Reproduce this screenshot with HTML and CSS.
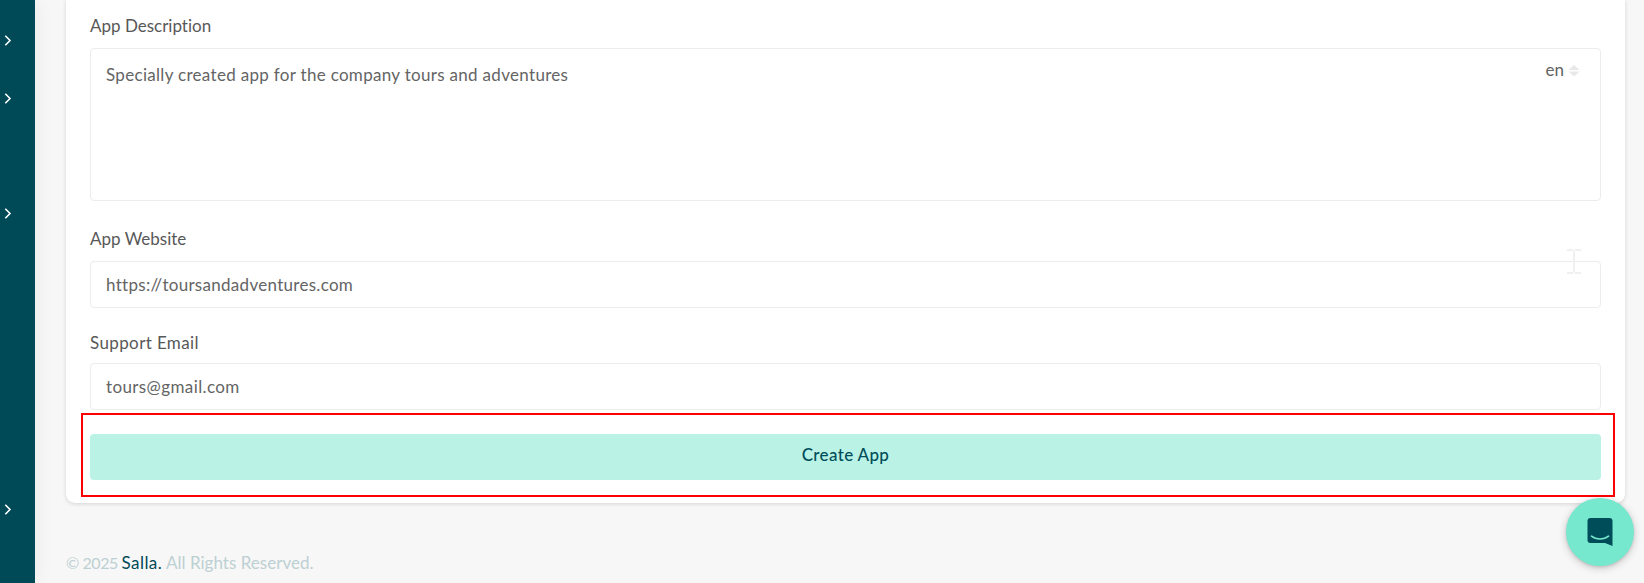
FILE: index.html
```html
<!DOCTYPE html>
<html lang="en">
<head>
<meta charset="utf-8">
<title>Create App</title>
<link rel="stylesheet" href="styles.css">
</head>
<body>
<div class="page">
  <nav class="sidebar">
    <svg class="chevron" viewBox="0 0 8 12"><path d="M1.3 1.7 6 6.500 1.3 11.300"/></svg>
    <svg class="chevron" viewBox="0 0 8 12"><path d="M1.3 1.7 6 6.500 1.3 11.300"/></svg>
    <svg class="chevron chevron-mid" viewBox="0 0 8 12"><path d="M1.3 1.7 6 6.500 1.3 11.300"/></svg>
    <svg class="chevron chevron-last" viewBox="0 0 8 12"><path d="M1.3 1.7 6 6.500 1.3 11.300"/></svg>
  </nav>
  <main class="content">
    <form class="card">
      <label class="label label-description"><span>App Description</span></label>
      <div class="field field-area">
        <span class="description">Specially created app for the company tours and adventures</span>
        <span class="lang">en
          <svg class="sort" viewBox="0 0 12 12"><path d="M6 0 11.5 5H.5zM.5 6.5h11L6 11.5z"/></svg>
        </span>
      </div>
      <label class="label label-website"><span>App Website</span></label>
      <div class="field"><span class="url">https://toursandadventures.com</span></div>
      <label class="label label-email"><span>Support Email</span></label>
      <div class="field"><span class="email">tours@gmail.com</span></div>
      <button class="submit" type="button">Create App</button>
    </form>
    <footer class="footer"><span class="year">© 2025 </span><a class="brand">Salla.</a> All Rights Reserved.</footer>
  </main>
</div>
<div class="highlight"></div>
<svg class="cursor" viewBox="0 0 14 25"><path d="M0 1h6M8 1h6M7 1.5v22M0 24h6M8 24h6"/></svg>
<div class="chat">
  <svg class="chat-icon" viewBox="0 0 26 28"><path class="bubble" d="M3.5 0h19Q25.500 0 25.500 3v25l-7.500-3H3.500Q.5 25 .5 22V3Q.5 0 3.500 0z"/><path class="smile" d="M4.500 18.200c4.500 3.700 12.500 3.700 17 0"/></svg>
</div>
</body>
</html>
```
FILE: styles.css
```css
* { box-sizing: border-box; }
body {
  margin: 0;
  height: 583px;
  overflow: hidden;
  background: #f7f7f7;
  color: #646464;
  font: 17px/20px Lato, "Open Sans", sans-serif;
  font-variant-ligatures: none;
}
.page { display: flex; height: 583px; }
.sidebar {
  width: 35px;
  flex: none;
  padding: 34px 0 0 4px;
  display: flex;
  flex-direction: column;
  background: #004956;
  box-shadow: 0 0 22px rgba(0, 0, 0, .06);
}
.chevron {
  width: 8px;
  height: 12px;
  flex: none;
  margin-bottom: 46px;
  fill: none;
  stroke: #fff;
  stroke-width: 1.6;
}
.chevron-mid { margin-top: 57px; }
.chevron-last { margin-top: 238px; }
.content { flex: 1; padding: 0 19px 0 31px; }
.card {
  height: 503px;
  padding: 16px 24px 0;
  display: flex;
  flex-direction: column;
  background: #fff;
  border-radius: 0 0 9px 9px;
  box-shadow: 0 1px 4px rgba(0, 0, 0, .14);
}
.label { height: 20px; flex: none; color: #585858; }
.label-description { margin-bottom: 12px; }
.label-website { margin: 28px 0 12px; }
.label-email { margin: 25px 0 10px; letter-spacing: .38px; }
.field {
  height: 47px;
  flex: none;
  display: flex;
  align-items: center;
  padding: 0 15px;
  border: 1px solid #ececec;
  border-radius: 4px;
}
.field-area {
  height: 153px;
  align-items: flex-start;
  justify-content: space-between;
  padding: 16px 20px 0 15px;
}
.description { letter-spacing: .31px; }
.url { letter-spacing: .29px; }
.email { letter-spacing: .39px; }
.lang { display: flex; align-items: center; gap: 4px; margin-top: -5px; }
.sort { width: 12px; height: 12px; margin-top: 1px; fill: #e8e8e8; }
.submit {
  height: 46px;
  flex: none;
  margin-top: 24px;
  padding: 0 0 4px;
  border: 0;
  border-radius: 4px;
  background: #baf3e6;
  color: #004d5a;
  font: inherit;
  font-weight: 500;
  letter-spacing: .35px;
}
.footer { padding-top: 50px; color: #bdd0d3; letter-spacing: .02px; }
.year { font-size: 16px; letter-spacing: -.45px; }
.brand { color: #004956; letter-spacing: .45px; }
.highlight {
  position: absolute;
  left: 81px;
  top: 413px;
  width: 1534px;
  height: 84px;
  border: 2px solid #f00;
}
.cursor {
  position: absolute;
  left: 1567px;
  top: 249px;
  width: 14px;
  height: 25px;
  fill: none;
  stroke: #f0f0f0;
  stroke-width: 2;
}
.chat {
  position: absolute;
  left: 1566px;
  top: 498px;
  width: 68px;
  height: 68px;
  display: grid;
  place-items: center;
  border-radius: 50%;
  background: #76e8cd;
  box-shadow: 0 2px 8px rgba(0, 0, 0, .2), 0 1px 3px rgba(0, 0, 0, .12);
}
.chat-icon { width: 26px; height: 28px; }
.bubble { fill: #004d5a; }
.smile { fill: none; stroke: #76e8cd; stroke-width: 1.7; stroke-linecap: round; }
```
